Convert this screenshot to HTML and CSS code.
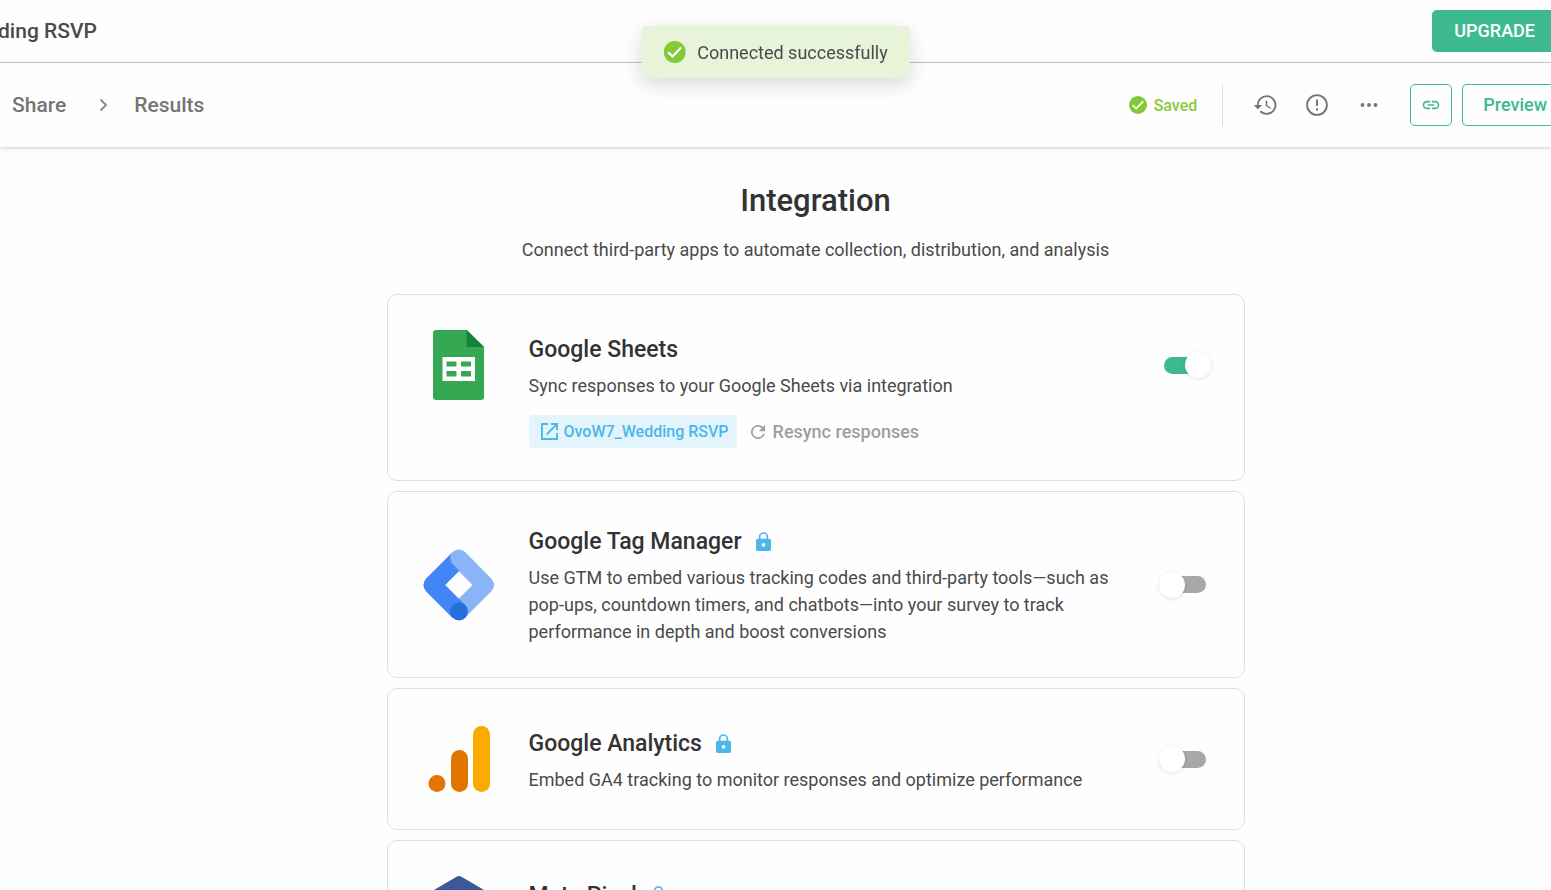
FILE: index.html
```html
<!DOCTYPE html>
<html lang="en">
  <head>
    <meta charset="UTF-8" />
    <meta name="viewport" content="width=device-width, initial-scale=1.0" />
    <title>Wedding RSVP - Integration</title>
    <link rel="stylesheet" href="styles.css">
  </head>
  <body>
    <!-- Top bar -->
    <header class="topbar">
      <div class="form-name">ding RSVP</div>
      <button class="upgrade-btn">UPGRADE</button>
    </header>

    <!-- Step navigation -->
    <nav class="steps">
      <div class="step-links">
        <a href="#share">Share</a>
        <svg class="chevron" viewBox="0 0 18 14"><path d="M9.500 1.500 15 7l-5.500 5.500" /></svg>
        <a href="#results">Results</a>
      </div>
      <div class="step-tools">
        <div class="saved">
          <svg class="check" viewBox="0 0 20 20"><circle cx="10" cy="10" r="10" /><path d="m4 10.200 4 3.800 7.800-8" /></svg>
          <span>Saved</span>
        </div>
        <div class="tool-icons">
          <button class="icon-btn" aria-label="History">
            <svg viewBox="0 0 24 24"><path d="M13.500 3a9 9 0 0 0-9 9H1.500l4 4 4-4H6.200a7.300 7.300 0 1 1 2.140 5.160l-1.210 1.210A9 9 0 1 0 13.500 3zM12.700 8v5l4.280 2.540.62-1.060-3.500-2.080V8z" /></svg>
          </button>
          <button class="icon-btn" aria-label="Feedback">
            <svg viewBox="0 0 24 24"><path d="M11.100 15h1.800v2h-1.800zm0-8h1.800v6h-1.800zm.9-5a10 10 0 1 0 0 20 10 10 0 0 0 0-20zm0 18.300a8.300 8.300 0 1 1 0-16.600 8.300 8.300 0 0 1 0 16.600z" /></svg>
          </button>
          <button class="icon-btn" aria-label="More">
            <svg viewBox="0 0 24 24"><circle cx="6" cy="12" r="1.800" /><circle cx="12" cy="12" r="1.800" /><circle cx="18" cy="12" r="1.800" /></svg>
          </button>
        </div>
        <button class="outline-btn link-btn" aria-label="Copy link">
          <svg viewBox="0 0 24 24"><path d="M3.900 12c0-1.710 1.390-3.100 3.100-3.100h4V7H7a5 5 0 0 0 0 10h4v-1.900H7A3.100 3.100 0 0 1 3.900 12zM8 13h8v-2H8zm9-6h-4v1.900h4a3.100 3.100 0 0 1 0 6.200h-4V17h4a5 5 0 0 0 0-10z" /></svg>
        </button>
        <button class="outline-btn preview-btn">Preview</button>
      </div>
    </nav>

    <main>
      <h1>Integration</h1>
      <p class="intro">Connect third-party apps to automate collection, distribution, and analysis</p>

      <div class="card-list">
        <!-- Google Sheets -->
        <section class="card">
          <svg class="logo" viewBox="0 0 72 72">
            <path d="M13 1h31l17 17v50a3 3 0 0 1-3 3H13a3 3 0 0 1-3-3V4a3 3 0 0 1 3-3z" fill="#34a853" />
            <path d="M43.500 1 61 18H43.500z" fill="#188038" />
            <path d="M19.500 28h32.500v24H19.500zM23.500 32.500v5h10v-5zM38 32.500v5h10v-5zM23.500 42v5.500h10V42zM38 42v5.500h10V42z" fill="#fff" fill-rule="evenodd" />
          </svg>
          <div class="card-text">
            <h2 id="sheets">Google Sheets</h2>
            <p>Sync responses to your Google Sheets via integration</p>
          </div>
          <input class="switch" type="checkbox" aria-labelledby="sheets" checked>
          <div class="card-actions">
            <a class="sheet-link" href="#sheet">
              <svg viewBox="0 0 18 18"><path d="M7.500 1H1v16h16v-6.500M10.500 1H17v6.500M17 1 6 12" /></svg>
              OvoW7_Wedding RSVP
            </a>
            <button class="resync-btn">
              <svg viewBox="0 0 16 16"><path d="M13.650 2.350A8 8 0 1 0 15.730 10h-2.080A6 6 0 1 1 8 2c1.660 0 3.140.69 4.220 1.780L9 7h7V0z" /></svg>
              Resync responses
            </button>
          </div>
        </section>

        <!-- Google Tag Manager -->
        <section class="card">
          <svg class="logo" viewBox="0 0 72 72">
            <path d="M36 9.500 62 36 36 62" fill="none" stroke="#8ab4f8" stroke-width="18" stroke-linejoin="round" stroke-linecap="round" />
            <path d="M29.600 3.100 3.100 29.600a9 9 0 0 0 0 12.800l26.500 26.500L42.400 56.200 22.200 36l14.200-14.200-6.400-6.400a9 9 0 0 1-.4-12.300z" fill="#4285f4" />
            <circle cx="36" cy="62.500" r="9" fill="#246fdb" />
          </svg>
          <div class="card-text">
            <h2 id="gtm">Google Tag Manager
              <svg class="lock" viewBox="0 0 16 20"><path d="M14 7h-1V5A5 5 0 0 0 3 5v2H2a2 2 0 0 0-2 2v9a2 2 0 0 0 2 2h12a2 2 0 0 0 2-2V9a2 2 0 0 0-2-2zM8 15.500a2 2 0 1 1 0-4 2 2 0 0 1 0 4zM11.200 7H4.800V5a3.200 3.200 0 0 1 6.400 0z" /></svg>
            </h2>
            <p>Use GTM to embed various tracking codes and third-party tools—such as pop-ups, countdown timers, and chatbots—into your survey to track performance in depth and boost conversions</p>
          </div>
          <input class="switch" type="checkbox" aria-labelledby="gtm">
        </section>

        <!-- Google Analytics -->
        <section class="card">
          <svg class="logo" viewBox="0 0 72 72">
            <rect x="50" y="3" width="17" height="66" rx="8.500" fill="#f9ab00" />
            <rect x="28" y="27" width="17" height="42" rx="8.500" fill="#e37400" />
            <circle cx="14" cy="60.500" r="8.500" fill="#e37400" />
          </svg>
          <div class="card-text">
            <h2 id="ga">Google Analytics
              <svg class="lock" viewBox="0 0 16 20"><path d="M14 7h-1V5A5 5 0 0 0 3 5v2H2a2 2 0 0 0-2 2v9a2 2 0 0 0 2 2h12a2 2 0 0 0 2-2V9a2 2 0 0 0-2-2zM8 15.500a2 2 0 1 1 0-4 2 2 0 0 1 0 4zM11.200 7H4.800V5a3.200 3.200 0 0 1 6.400 0z" /></svg>
            </h2>
            <p>Embed GA4 tracking to monitor responses and optimize performance</p>
          </div>
          <input class="switch" type="checkbox" aria-labelledby="ga">
        </section>

        <!-- Meta Pixel -->
        <section class="card">
          <svg class="logo" viewBox="0 0 72 72">
            <path d="M33.500 1.700a5 5 0 0 1 5 0l25.500 15a5 5 0 0 1 2.500 4.300v30a5 5 0 0 1-2.500 4.300l-25.500 15a5 5 0 0 1-5 0L8 55.300A5 5 0 0 1 5.500 51V21A5 5 0 0 1 8 16.700z" fill="#3b5998" />
          </svg>
          <div class="card-text">
            <h2 id="pixel">Meta Pixel
              <svg class="lock" viewBox="0 0 16 20"><path d="M14 7h-1V5A5 5 0 0 0 3 5v2H2a2 2 0 0 0-2 2v9a2 2 0 0 0 2 2h12a2 2 0 0 0 2-2V9a2 2 0 0 0-2-2zM8 15.500a2 2 0 1 1 0-4 2 2 0 0 1 0 4zM11.200 7H4.800V5a3.200 3.200 0 0 1 6.400 0z" /></svg>
            </h2>
            <p>Embed Meta Pixel to track responses and ad performance</p>
          </div>
          <input class="switch" type="checkbox" aria-labelledby="pixel">
        </section>
      </div>
    </main>

    <!-- Toast -->
    <div class="toast" role="status">
      <svg class="check" viewBox="0 0 20 20"><circle cx="10" cy="10" r="10" /><path d="m4 10.200 4 3.800 7.800-8" /></svg>
      Connected successfully
    </div>
  </body>
</html>
```

FILE: styles.css
```css
/* General Styling */
* {
  margin: 0;
  padding: 0;
  box-sizing: border-box;
}

body {
  height: 100vh;
  overflow: hidden;
  background-color: #fefefe;
  color: #4a4a4a;
  font-family: Roboto, sans-serif;
  font-size: 18px;
  line-height: 27px;
}

button {
  border: none;
  background: none;
  font: inherit;
  color: inherit;
  cursor: pointer;
}

a {
  color: inherit;
  text-decoration: none;
}

/* Top bar */
.topbar {
  display: flex;
  align-items: center;
  justify-content: space-between;
  height: 63px;
  border-bottom: 1px solid #ccc;
}

.form-name {
  margin-left: -2px;
  font-size: 21px;
  font-weight: 500;
}

.upgrade-btn {
  height: 42px;
  padding: 0 16px 2px 22px;
  border-radius: 5px 0 0 5px;
  background-color: #3dba8e;
  color: white;
  font-weight: 500;
}

/* Step navigation */
.steps {
  display: flex;
  align-items: center;
  justify-content: space-between;
  height: 84px;
  padding-left: 12px;
  box-shadow: 0 1px 4px rgba(0, 0, 0, 0.2);
}

.step-links {
  display: flex;
  align-items: center;
  gap: 25px;
  color: #757575;
  font-size: 21px;
  font-weight: 500;
}

.chevron {
  width: 18px;
  height: 14px;
  fill: none;
  stroke: #8c8c8c;
  stroke-width: 2;
}

.step-tools {
  display: flex;
  align-items: center;
}

.saved {
  display: flex;
  align-items: center;
  gap: 7px;
  height: 42px;
  padding-right: 25px;
  border-right: 1px solid #ddd;
  color: #88ca3c;
  font-size: 16px;
  font-weight: 500;
}

.check {
  width: 18px;
  height: 18px;
  fill: #84ca36;
}

.check path {
  fill: none;
  stroke: #fff;
  stroke-width: 2;
}

.tool-icons {
  display: flex;
  gap: 26px;
  padding: 0 28px 0 29px;
}

.icon-btn {
  width: 26px;
  height: 26px;
}

.icon-btn svg {
  display: block;
  width: 26px;
  height: 26px;
  fill: #757575;
}

.outline-btn {
  height: 42px;
  border: 1px solid #3dba8e;
  border-radius: 5px;
  color: #3dba8e;
  font-weight: 500;
}

.link-btn {
  display: flex;
  align-items: center;
  justify-content: center;
  width: 42px;
  margin-right: 10px;
}

.link-btn svg {
  width: 20px;
  height: 20px;
  fill: #3dba8e;
}

.preview-btn {
  padding: 0 4px 2px 20px;
  border-right: none;
  border-radius: 5px 0 0 5px;
}

/* Integration list */
main {
  padding: 34px 0 0 80px;
}

h1 {
  color: #333;
  font-size: 31px;
  font-weight: 500;
  line-height: 40px;
  text-align: center;
}

.intro {
  margin-top: 15px;
  text-align: center;
}

.card-list {
  display: flex;
  flex-direction: column;
  gap: 10px;
  max-width: 858px;
  margin: 31px auto 0;
}

.card {
  display: grid;
  grid-template-columns: 72px 1fr 52px;
  align-items: center;
  column-gap: 34px;
  padding: 32px 33px 32px 35px;
  border: 1px solid #dedede;
  border-radius: 10px;
}

.logo {
  width: 72px;
  height: 72px;
  margin: 2px 0;
}

.card-text {
  padding-top: 4px;
}

.card-text h2 {
  display: flex;
  align-items: center;
  gap: 14px;
  margin-bottom: 9px;
  color: #333;
  font-size: 23px;
  font-weight: 500;
  line-height: 27px;
}

.lock {
  width: 15px;
  height: 19px;
  fill: #4bb7ea;
}

.card-actions {
  grid-column: 2;
  display: flex;
  align-items: center;
  gap: 14px;
  margin-top: 12px;
  font-weight: 500;
}

.sheet-link {
  display: flex;
  align-items: center;
  gap: 6px;
  height: 33px;
  padding: 0 8px 0 12px;
  border-radius: 4px;
  background-color: #e3f4fc;
  color: #4bb7ea;
  font-size: 16px;
}

.sheet-link svg {
  width: 17px;
  height: 17px;
  fill: none;
  stroke: #4bb7ea;
  stroke-width: 2;
}

.resync-btn {
  display: flex;
  align-items: center;
  gap: 8px;
  color: #9e9e9e;
}

.resync-btn svg {
  width: 14px;
  height: 14px;
  fill: #9e9e9e;
}

/* Toggle switch */
.switch {
  appearance: none;
  display: flex;
  align-items: center;
  position: relative;
  width: 52px;
  height: 26px;
  cursor: pointer;
}

.switch::before {
  content: "";
  width: 42px;
  height: 17px;
  margin: 0 auto;
  border-radius: 9px;
  background-color: #a8a8a8;
}

.switch::after {
  content: "";
  position: absolute;
  top: 0;
  left: 0;
  width: 26px;
  height: 26px;
  border-radius: 50%;
  background-color: #fff;
  box-shadow: 0 1px 4px rgba(0, 0, 0, 0.12);
}

.switch:checked::before {
  background-color: #3dba8e;
}

.switch:checked::after {
  left: auto;
  right: 0;
}

/* Toast */
.toast {
  display: flex;
  align-items: center;
  gap: 12px;
  position: fixed;
  top: 26px;
  left: 50%;
  transform: translateX(-50%);
  height: 52px;
  padding: 0 22px;
  border-radius: 4px;
  background-color: #e7f4d9;
  box-shadow: 0 6px 20px rgba(0, 0, 0, 0.15);
  white-space: nowrap;
}

.toast .check {
  width: 22px;
  height: 22px;
}
```
